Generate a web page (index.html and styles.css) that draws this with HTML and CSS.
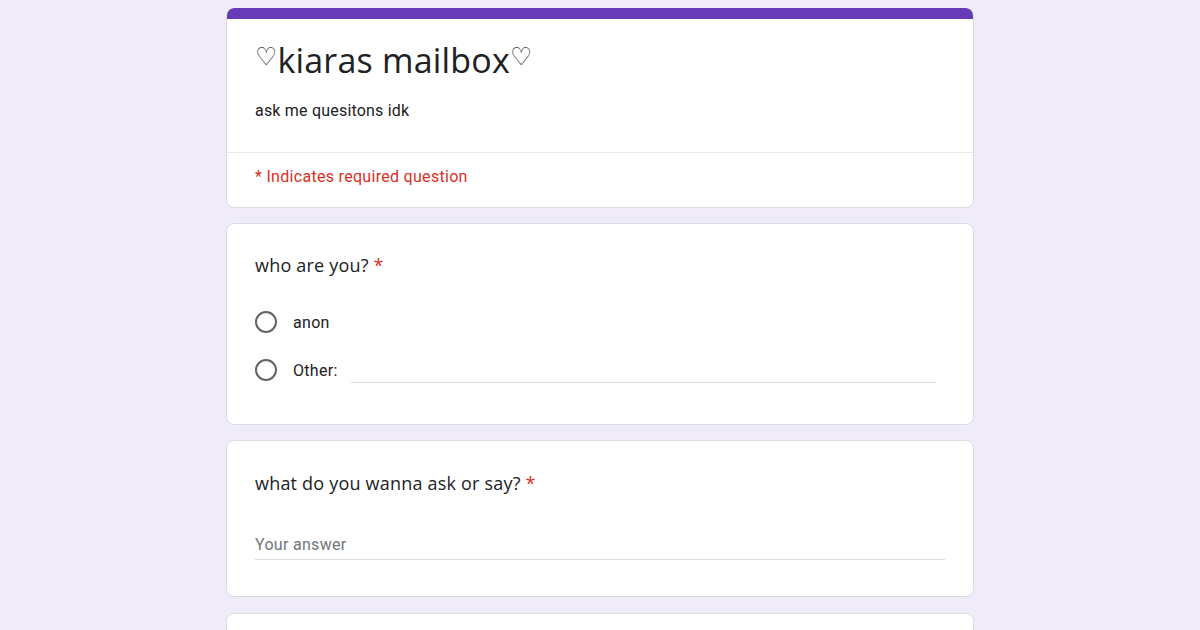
FILE: index.html
```html
<!DOCTYPE html>
<html>
<head>
<meta charset="utf-8">
<link rel="stylesheet" href="styles.css">
</head>
<body>
<div class="page">
  <div class="card header">
    <div class="bar"></div>
    <div class="head-main">
      <div class="title"><span class="heart">♡</span>kiaras mailbox<span class="heart">♡</span></div>
      <div class="desc">ask me quesitons idk</div>
    </div>
    <div class="head-req">* Indicates required question</div>
  </div>

  <div class="card q">
    <div class="qtitle">who are you? <span class="star">*</span></div>
    <div class="options">
      <div class="opt"><span class="radio"></span><span class="label">anon</span></div>
      <div class="opt"><span class="radio"></span><span class="label">Other:</span><span class="other-line"></span></div>
    </div>
  </div>

  <div class="card q q2">
    <div class="qtitle">what do you wanna ask or say? <span class="star">*</span></div>
    <div class="answer">Your answer</div>
  </div>

  <div class="card q last"></div>
</div>
</body>
</html>
```

FILE: styles.css
```css
html, body {
  margin: 0;
  padding: 0;
  background: #f0ebf8;
  height: 630px;
  overflow: hidden;
}
.page {
  width: 748px;
  margin: 0 auto;
  padding-top: 8px;
  display: flex;
  flex-direction: column;
  gap: 15px;
}
.card {
  background: #fff;
  border: 1px solid #dadce0;
  border-radius: 8px;
  overflow: hidden;
}
.header {
  border-top: none;
}
.bar {
  height: 11px;
  background: #673ab7;
  border-radius: 8px 8px 0 0;
  margin: 0 -1px;
}
.head-main {
  padding: 19px 28px 29px;
  border-bottom: 1px solid #e8e8ea;
}
.title {
  font-family: "Open Sans", sans-serif;
  font-size: 34px;
  line-height: 44px;
  color: #202124;
  letter-spacing: 0.2px;
  display: flex;
  align-items: center;
}
.heart {
  font-family: "DejaVu Sans", sans-serif;
  font-size: 25px;
  line-height: 30px;
  color: #3c4043;
  letter-spacing: 0;
  margin-top: -6px;
}
.desc {
  font-family: Roboto, sans-serif;
  font-size: 16px;
  line-height: 24px;
  margin-top: 17px;
  color: #202124;
  letter-spacing: 0.2px;
}
.head-req {
  font-family: Roboto, sans-serif;
  font-size: 16px;
  line-height: 24px;
  color: #d93025;
  padding: 12px 28px 18px;
  letter-spacing: 0.3px;
}
.q {
  padding: 29px 28px 34px;
}
.qtitle {
  font-family: "Open Sans", sans-serif;
  font-size: 18px;
  line-height: 24px;
  color: #202124;
  letter-spacing: 0.2px;
}
.star {
  color: #d93025;
}
.options {
  margin-top: 25px;
  display: flex;
  flex-direction: column;
  gap: 8px;
}
.opt {
  display: flex;
  align-items: center;
  height: 40px;
}
.radio {
  width: 22px;
  height: 22px;
  border: 2px solid #5f6368;
  border-radius: 50%;
  box-sizing: border-box;
  flex: none;
}
.label {
  font-family: Roboto, sans-serif;
  font-size: 16px;
  color: #202124;
  margin-left: 16px;
  letter-spacing: 0.3px;
}
.other-line {
  flex: 1;
  align-self: flex-end;
  margin: 0 9px 7px 13px;
  border-bottom: 1px solid #dadce0;
}
.q2 {
  padding: 30px 28px 36px;
}
.answer {
  margin-top: 38px;
  font-family: Roboto, sans-serif;
  font-size: 16px;
  line-height: 24px;
  color: #70757a;
  letter-spacing: 0.3px;
  padding-bottom: 2px;
  border-bottom: 1px solid #dadce0;
}
.last {
  height: 60px;
  margin-top: 1px;
}
```
